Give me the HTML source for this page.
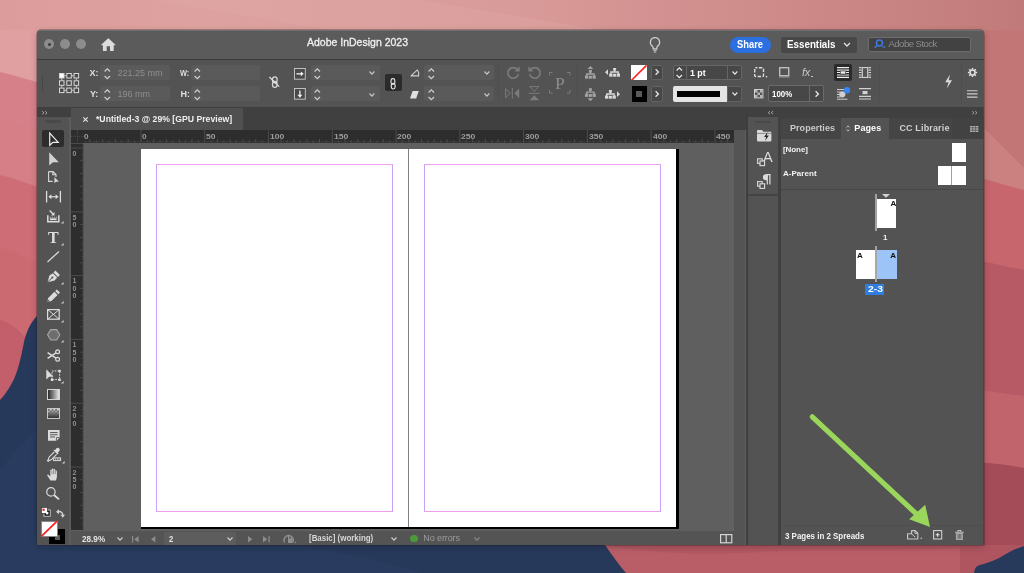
<!DOCTYPE html>
<html lang="en">
<head>
<meta charset="utf-8">
<title>Adobe InDesign 2023</title>
<style>
*{box-sizing:border-box;margin:0;padding:0}
html,body{width:1024px;height:573px;overflow:hidden;background:#cf8f92;font-family:"Liberation Sans",sans-serif;}
#stage{position:absolute;left:0;top:0;width:1024px;height:573px;overflow:hidden}
#ui{position:absolute;left:0;top:0;width:1024px;height:573px;will-change:transform}
.a{position:absolute}
#bg{position:absolute;left:0;top:0;width:1024px;height:573px}
#win{position:absolute;left:37px;top:30px;width:947px;height:515px;background:#535353;border-radius:4px 4px 0 0;box-shadow:0 0 0 .5px rgba(40,30,30,.55),0 2px 7px rgba(0,0,0,.22)}
.t{position:absolute;white-space:nowrap;color:#e6e6e6;font-weight:bold;font-size:10px;line-height:12px}
svg{position:absolute;overflow:visible}
</style>
</head>
<body>
<div id="stage">

<svg id="bg" viewBox="0 0 1024 573" width="1024" height="573">
<defs>
<linearGradient id="gtop" x1="0" y1="0" x2="1" y2="0"><stop offset="0" stop-color="#dd9c9c"/><stop offset=".2" stop-color="#dda2a0"/><stop offset=".5" stop-color="#d99b99"/><stop offset=".7" stop-color="#d08e8d"/><stop offset=".9" stop-color="#c68281"/><stop offset="1" stop-color="#c07a79"/></linearGradient>
</defs>
<rect width="1024" height="573" fill="url(#gtop)"/>
<path d="M150 0H420L600 30H330Z" fill="#e0a8a6" opacity=".35"/>
<rect x="0" y="30" width="60" height="543" fill="#e0a0a2"/>
<path d="M0 72C14 75 26 79 40 83V573H0Z" fill="#d68189"/>
<path d="M0 120C14 122 26 126 40 130V573H0Z" fill="#d67f86"/>
<path d="M0 175C14 178 26 183 40 188V573H0Z" fill="#ce6d75"/>
<path d="M0 248C14 252 26 258 40 264V573H0Z" fill="#cc6a72"/>
<path d="M0 320C10 322 20 330 28 342L20 400H0Z" fill="#c35f6a"/>
<path d="M560 545H1024V573H560Z" fill="#b25862"/>
<path d="M604 545C640 552 700 556 760 552C820 548 900 552 984 547V573H626C619 565 612 555 604 545Z" fill="#b95e67"/>
<path d="M37 316C30 323 26 333 24 342C21 358 18 370 14 379C9 389 4 396 0 400V573H626C619 565 612 555 605 545H37Z" fill="#27395b"/>
<path d="M0 470C12 455 24 440 37 430V545H300C340 552 380 560 420 573H0Z" fill="#2c4064" opacity=".5"/>
<rect x="960" y="30" width="64" height="543" fill="#c27675"/>
<path d="M960 104L1024 168V573H960Z" fill="#ca8180"/>
<path d="M960 172C980 177 1000 184 1024 190V573H960Z" fill="#c8666d"/>
<path d="M960 256C985 262 1005 266 1024 270V573H960Z" fill="#b85a65"/>
<path d="M960 388C985 390 1005 394 1024 396V573H960Z" fill="#c2646c"/>
<path d="M960 462C985 462 1005 464 1024 468V573H960Z" fill="#a54c59"/>
<path d="M960 545H1024V573H960Z" fill="#ae5560"/>
<path d="M974 573C975 568 976 566 980 565C990 562 996 560 1001 557C1008 553 1014 549 1024 546V573Z" fill="#283a5c"/>
</svg>

<div id="win"></div>
<div id="ui">
<div class="a" style="left:37px;top:30px;width:947px;height:29.5px;background:#5b5b5b;border-radius:4px 4px 0 0;border-bottom:1.500px solid #3a3a3a;border-top:1px solid #6b6e6e"></div>
<div class="a" style="left:44px;top:39.3px;width:10px;height:10px;background:#8c8c8c;border-radius:50%"></div>
<div class="a" style="left:60px;top:39.3px;width:10px;height:10px;background:#8c8c8c;border-radius:50%"></div>
<div class="a" style="left:76.3px;top:39.3px;width:10px;height:10px;background:#8c8c8c;border-radius:50%"></div>
<div class="a" style="left:47.5px;top:42.8px;width:3px;height:3px;background:#3c3c3c;border-radius:50%"></div>
<svg style="left:100.5px;top:37.8px;" width="14.6" height="13" viewBox="0 0 14.6 13"><path d="M7.300 .2Q7.300 0 7.700 .4L14.400 6.800Q14.700 7.200 14.200 7.200H12.700V12.400Q12.700 12.900 12.200 12.900H9V8.300H5.700V12.900H2.400Q1.900 12.900 1.900 12.400V7.200H.4Q-.1 7.200 .2 6.800L6.900 .4Q7.300 0 7.300 .2Z" fill="#dcdcdc"/></svg>
<div class="t" style="left:306.5px;top:36px;font-size:11px;line-height:13px;color:#f0f0f0;font-weight:normal;transform:scaleX(0.9545);transform-origin:0 0;-webkit-text-stroke:.3px #f0f0f0;">Adobe InDesign 2023</div>
<svg style="left:649px;top:37px;" width="12" height="16" viewBox="0 0 12 16"><path d="M6 .7a4.600 4.600 0 0 0-2.600 8.400c.5.5.8 1.100.8 1.900v.8h3.600v-.8c0-.8.300-1.400.8-1.900A4.600 4.600 0 0 0 6 .7Z" fill="none" stroke="#cfcfcf" stroke-width="1.300"/><path d="M4.300 13.300h3.400M4.800 15h2.400" stroke="#cfcfcf" stroke-width="1.100" fill="none"/></svg>
<div class="a" style="left:729.5px;top:36.5px;width:41px;height:16px;background:#2c6fe0;border-radius:8px"></div>
<div class="t" style="left:736.5px;top:38.3px;font-size:10.5px;line-height:12.5px;color:#fff;transform:scaleX(0.8907);transform-origin:0 0;">Share</div>
<div class="a" style="left:780.5px;top:36.5px;width:76px;height:16px;background:#484848;border-radius:2px"></div>
<div class="t" style="left:786.5px;top:38px;font-size:10.5px;line-height:12.5px;color:#fff;transform:scaleX(0.9331);transform-origin:0 0;">Essentials</div>
<svg style="left:843px;top:42px;" width="8" height="5" viewBox="0 0 8 5"><path d="M1 1l3 3 3-3" fill="none" stroke="#e0e0e0" stroke-width="1.300"/></svg>
<div class="a" style="left:868px;top:36.5px;width:103px;height:15px;background:#424242;border-radius:2px;border:1px solid #6c6c6c"></div>
<svg style="left:874px;top:39px;" width="12" height="10" viewBox="0 0 12 10"><circle cx="5.500" cy="4" r="3" fill="none" stroke="#3d7be0" stroke-width="1.400"/><path d="M3.300 6.200L.8 8.800" stroke="#3d7be0" stroke-width="1.500"/><path d="M8.500 8h3" stroke="#3d7be0" stroke-width="1.200"/></svg>
<div class="t" style="left:888.5px;top:38px;font-size:9.5px;line-height:11.5px;color:#8d8d8d;font-weight:normal;letter-spacing:-0.5px;">Adobe Stock</div>
<div class="a" style="left:42px;top:75.5px;width:1px;height:15.5px;background:#464646;"></div>
<svg style="left:59.1px;top:72.8px;" width="20.1" height="20.1" viewBox="0 0 20.1 20.1"><path d="M5.500 2.750H7.300M12.800 2.750H14.600M5.500 17.350H7.300M12.800 17.350H14.600M2.750 5.500V7.300M2.750 12.800V14.600M17.350 5.500V7.300M17.350 12.800V14.600" stroke="#d0d0d0" stroke-width="1" fill="none"/><rect x="0.5" y="0.5" width="4.500" height="4.500" fill="#fff" stroke="#d8d8d8" stroke-width="1"/><rect x="7.8" y="0.5" width="4.500" height="4.500" fill="#494949" stroke="#d8d8d8" stroke-width="1"/><rect x="15.1" y="0.5" width="4.500" height="4.500" fill="#494949" stroke="#d8d8d8" stroke-width="1"/><rect x="0.5" y="7.8" width="4.500" height="4.500" fill="#494949" stroke="#d8d8d8" stroke-width="1"/><rect x="7.8" y="7.8" width="4.500" height="4.500" fill="#494949" stroke="#d8d8d8" stroke-width="1"/><rect x="15.1" y="7.8" width="4.500" height="4.500" fill="#494949" stroke="#d8d8d8" stroke-width="1"/><rect x="0.5" y="15.1" width="4.500" height="4.500" fill="#494949" stroke="#d8d8d8" stroke-width="1"/><rect x="7.8" y="15.1" width="4.500" height="4.500" fill="#494949" stroke="#d8d8d8" stroke-width="1"/><rect x="15.1" y="15.1" width="4.500" height="4.500" fill="#494949" stroke="#d8d8d8" stroke-width="1"/></svg>
<div class="t" style="left:89.5px;top:67.5px;font-size:9px;line-height:11px;color:#dedede;">X:</div>
<div class="t" style="left:90px;top:88.5px;font-size:9px;line-height:11px;color:#dedede;">Y:</div>
<div class="a" style="left:100px;top:64.5px;width:69.5px;height:15.8px;background:#5a5a5a;border-radius:2px"></div>
<div class="a" style="left:100px;top:85.7px;width:69.5px;height:15.8px;background:#5a5a5a;border-radius:2px"></div>
<svg style="left:103.5px;top:64.5px;" width="7" height="16" viewBox="0 0 7 16"><path d="M.6 6.500L3.300 3.900L6 6.500M.6 11L3.300 13.600L6 11" fill="none" stroke="#cecece" stroke-width="1.250"/></svg>
<svg style="left:103.5px;top:85.7px;" width="7" height="16" viewBox="0 0 7 16"><path d="M.6 6.500L3.300 3.900L6 6.500M.6 11L3.300 13.600L6 11" fill="none" stroke="#cecece" stroke-width="1.250"/></svg>
<div class="t" style="left:117.5px;top:68.1px;font-size:9px;line-height:11px;color:#8e8e8e;font-weight:normal;">221.25 mm</div>
<div class="t" style="left:117.5px;top:89.2px;font-size:9px;line-height:11px;color:#8e8e8e;font-weight:normal;">196 mm</div>
<div class="t" style="left:179.8px;top:67.5px;font-size:9px;line-height:11px;color:#dedede;transform:scaleX(0.8201);transform-origin:0 0;">W:</div>
<div class="t" style="left:180.5px;top:88.5px;font-size:9px;line-height:11px;color:#dedede;">H:</div>
<div class="a" style="left:190.5px;top:64.5px;width:69.2px;height:15.8px;background:#5a5a5a;border-radius:2px"></div>
<div class="a" style="left:190.5px;top:85.7px;width:69.2px;height:15.8px;background:#5a5a5a;border-radius:2px"></div>
<svg style="left:193.5px;top:64.5px;" width="7" height="16" viewBox="0 0 7 16"><path d="M.6 6.500L3.300 3.900L6 6.500M.6 11L3.300 13.600L6 11" fill="none" stroke="#cecece" stroke-width="1.250"/></svg>
<svg style="left:193.5px;top:85.7px;" width="7" height="16" viewBox="0 0 7 16"><path d="M.6 6.500L3.300 3.900L6 6.500M.6 11L3.300 13.600L6 11" fill="none" stroke="#cecece" stroke-width="1.250"/></svg>
<svg style="left:269px;top:76px;" width="11" height="12.4" viewBox="0 0 11 12.4"><g fill="none" stroke="#d6d6d6" stroke-width="1.250"><rect x="3.500" y=".9" width="4.600" height="6" rx="2.300"/><rect x="3.500" y="5.400" width="4.600" height="6" rx="2.300"/><path d="M.4 1L10.200 10.600" stroke="#e0e0e0" stroke-width="1.150"/></g></svg>
<svg style="left:294.3px;top:67.5px;" width="11.8" height="11.7" viewBox="0 0 11.8 11.7"><rect x=".5" y=".5" width="10.800" height="10.700" fill="#4a4a4a" stroke="#c6c6c6" stroke-width=".95"/><path d="M2.400 5.850H7.500" stroke="#f4f4f4" stroke-width="1.300"/><path d="M6.800 3.400L9.700 5.850L6.800 8.300Z" fill="#f4f4f4"/></svg>
<svg style="left:294.3px;top:88.2px;" width="11.8" height="11.7" viewBox="0 0 11.8 11.7"><rect x=".5" y=".5" width="10.800" height="10.700" fill="#4a4a4a" stroke="#c6c6c6" stroke-width=".95"/><path d="M5.900 2.400V7.500" stroke="#f4f4f4" stroke-width="1.300"/><path d="M3.450 6.800L5.900 9.700L8.350 6.800Z" fill="#f4f4f4"/></svg>
<div class="a" style="left:310.5px;top:64.5px;width:69.2px;height:15.8px;background:#5a5a5a;border-radius:2px"></div>
<div class="a" style="left:310.5px;top:85.7px;width:69.2px;height:15.8px;background:#5a5a5a;border-radius:2px"></div>
<svg style="left:313.5px;top:64.5px;" width="7" height="16" viewBox="0 0 7 16"><path d="M.6 6.500L3.300 3.900L6 6.500M.6 11L3.300 13.600L6 11" fill="none" stroke="#cecece" stroke-width="1.250"/></svg>
<svg style="left:313.5px;top:85.7px;" width="7" height="16" viewBox="0 0 7 16"><path d="M.6 6.500L3.300 3.900L6 6.500M.6 11L3.300 13.600L6 11" fill="none" stroke="#cecece" stroke-width="1.250"/></svg>
<svg style="left:369.3px;top:71.3px;" width="5.8" height="4" viewBox="0 0 5.8 4"><path d="M.5 .5L2.9 3.200L5.3 .5" fill="none" stroke="#c8c8c8" stroke-width="1.150"/></svg>
<svg style="left:369.3px;top:92.5px;" width="5.8" height="4" viewBox="0 0 5.8 4"><path d="M.5 .5L2.9 3.200L5.3 .5" fill="none" stroke="#c8c8c8" stroke-width="1.150"/></svg>
<div class="a" style="left:384.8px;top:74px;width:17.2px;height:17.4px;background:#2b2b2b;border-radius:2px"></div>
<svg style="left:390.3px;top:77.6px;" width="6" height="11.6" viewBox="0 0 6 11.6"><g fill="none" stroke="#e8e8e8" stroke-width="1.100"><rect x="1" y=".6" width="3.800" height="5.800" rx="1.900"/><rect x="1.300" y="5.200" width="3.800" height="5.800" rx="1.900"/></g></svg>
<svg style="left:410px;top:68.5px;" width="10" height="8" viewBox="0 0 10 8"><path d="M7.400 .8L1 6.900H9.200M7.400 .8A7 7 0 0 1 8.400 6.900" fill="none" stroke="#d0d0d0" stroke-width="1.100" stroke-linejoin="round"/></svg>
<svg style="left:410.2px;top:90.5px;" width="8.8" height="7.4" viewBox="0 0 8.8 7.4"><path d="M2.600 0H8.800L6.200 7.500H0Z" fill="#e0e0e0"/></svg>
<div class="a" style="left:424px;top:64.5px;width:69.8px;height:15.8px;background:#5a5a5a;border-radius:2px"></div>
<div class="a" style="left:424px;top:85.7px;width:69.8px;height:15.8px;background:#5a5a5a;border-radius:2px"></div>
<svg style="left:427.5px;top:64.5px;" width="7" height="16" viewBox="0 0 7 16"><path d="M.6 6.500L3.300 3.900L6 6.500M.6 11L3.300 13.600L6 11" fill="none" stroke="#cecece" stroke-width="1.250"/></svg>
<svg style="left:427.5px;top:85.7px;" width="7" height="16" viewBox="0 0 7 16"><path d="M.6 6.500L3.300 3.900L6 6.500M.6 11L3.300 13.600L6 11" fill="none" stroke="#cecece" stroke-width="1.250"/></svg>
<svg style="left:483.5px;top:71.3px;" width="5.8" height="4" viewBox="0 0 5.8 4"><path d="M.5 .5L2.9 3.200L5.3 .5" fill="none" stroke="#c8c8c8" stroke-width="1.150"/></svg>
<svg style="left:483.5px;top:92.5px;" width="5.8" height="4" viewBox="0 0 5.8 4"><path d="M.5 .5L2.9 3.200L5.3 .5" fill="none" stroke="#c8c8c8" stroke-width="1.150"/></svg>
<div class="a" style="left:498px;top:64px;width:1px;height:38px;background:#4f4f4f;"></div>
<svg style="left:505.5px;top:66px;" width="14" height="13" viewBox="0 0 14 13"><path d="M11.300 3.600A5.300 5.300 0 1 0 12.300 8.300" fill="none" stroke="#7b7b7b" stroke-width="1.700"/><path d="M13.700 .2V5.400H8.500Z" fill="#7b7b7b"/></svg>
<svg style="left:527.5px;top:66px;" width="14" height="13" viewBox="0 0 14 13"><path d="M2.700 3.600A5.300 5.300 0 1 1 1.700 8.300" fill="none" stroke="#7b7b7b" stroke-width="1.700"/><path d="M.3 .2V5.400H5.500Z" fill="#7b7b7b"/></svg>
<svg style="left:504.8px;top:88.3px;" width="14.6" height="10.6" viewBox="0 0 14.6 10.6"><path d="M.6 .8V9.800L5.300 5.300Z" fill="none" stroke="#7b7b7b" stroke-width="1"/><path d="M7.300 0V10.600" stroke="#7b7b7b" stroke-width="1"/><path d="M14.200 .4V10.200L9.300 5.300Z" fill="#7b7b7b"/></svg>
<svg style="left:529px;top:86.3px;" width="10.6" height="14.6" viewBox="0 0 10.6 14.6"><path d="M.8 .6H9.800L5.300 5.300Z" fill="none" stroke="#7b7b7b" stroke-width="1"/><path d="M0 7.300H10.600" stroke="#7b7b7b" stroke-width="1"/><path d="M.4 14.200H10.200L5.300 9.300Z" fill="#7b7b7b"/></svg>
<svg style="left:549px;top:72px;" width="21.5" height="21.5" viewBox="0 0 21.5 21.5"><path d="M.5 3.500V.5H3.500M18 .5H21V3.500M21 18V21H18M3.500 21H.5V18" fill="none" stroke="#7d7d7d" stroke-width="1"/><text x="10.900" y="16.900" text-anchor="middle" font-family="Liberation Serif,serif" font-size="17.500" fill="#8c8c8c">P</text></svg>
<div class="a" style="left:576.5px;top:64px;width:1px;height:38px;background:#4e4e4e;"></div>
<svg style="left:584.6px;top:66px;" width="11" height="13.2" viewBox="0 0 11 13.2"><path d="M5.400 0L8.300 3H2.500Z" fill="#a2a2a2"/><path d="M5.400 4.500V8M1.700 11.500V8H9.100V11.500" fill="none" stroke="#a2a2a2" stroke-width="1.300"/><rect x="3.900" y="4" width="3" height="2.600" fill="#a2a2a2"/><rect x="0" y="9.500" width="3.300" height="3.200" fill="#a2a2a2"/><rect x="7.500" y="9.500" width="3.300" height="3.200" fill="#a2a2a2"/><rect x="3.900" y="9.800" width="3" height="2.900" fill="#a2a2a2"/></svg>
<svg style="left:584.6px;top:87.7px;" width="11" height="13.2" viewBox="0 0 11 13.2"><g transform="translate(0,-3.800)"><path d="M5.400 4.500V8M1.700 11.500V8H9.100V11.500" fill="none" stroke="#a2a2a2" stroke-width="1.300"/><rect x="3.900" y="4" width="3" height="2.600" fill="#a2a2a2"/><rect x="0" y="9.500" width="3.300" height="3.200" fill="#a2a2a2"/><rect x="7.500" y="9.500" width="3.300" height="3.200" fill="#a2a2a2"/><rect x="3.900" y="9.800" width="3" height="2.900" fill="#a2a2a2"/></g><path d="M2.500 10.200H8.300L5.400 13.200Z" fill="#a2a2a2"/></svg>
<svg style="left:605px;top:64.2px;" width="15" height="13" viewBox="0 0 15 13"><path d="M0 8.200L3 5.300V11.100Z" fill="#d8d8d8"/><g transform="translate(4.200,0)"><path d="M5.400 4.500V8M1.700 11.500V8H9.100V11.500" fill="none" stroke="#d8d8d8" stroke-width="1.300"/><rect x="3.900" y="4" width="3" height="2.600" fill="#d8d8d8"/><rect x="0" y="9.500" width="3.300" height="3.200" fill="#d8d8d8"/><rect x="7.500" y="9.500" width="3.300" height="3.200" fill="#d8d8d8"/><rect x="3.900" y="9.800" width="3" height="2.900" fill="#d8d8d8"/></g></svg>
<svg style="left:605px;top:86px;" width="15" height="13" viewBox="0 0 15 13"><g transform="translate(0,0)"><path d="M5.400 4.500V8M1.700 11.500V8H9.100V11.500" fill="none" stroke="#d8d8d8" stroke-width="1.300"/><rect x="3.900" y="4" width="3" height="2.600" fill="#d8d8d8"/><rect x="0" y="9.500" width="3.300" height="3.200" fill="#d8d8d8"/><rect x="7.500" y="9.500" width="3.300" height="3.200" fill="#d8d8d8"/><rect x="3.900" y="9.800" width="3" height="2.900" fill="#d8d8d8"/></g><path d="M15 8.200L12 5.300V11.100Z" fill="#d8d8d8"/></svg>
<div class="a" style="left:631.4px;top:64.7px;width:15.8px;height:15.8px;background:#fff;"></div>
<svg style="left:631.4px;top:64.7px;overflow:hidden;" width="15.8" height="15.8" viewBox="0 0 15.8 15.8"><path d="M.3 15.500L15.500 .3" stroke="#ff1d1d" stroke-width="1.600"/></svg>
<div class="a" style="left:631.5px;top:86px;width:15.6px;height:15.7px;background:#000;"></div>
<div class="a" style="left:636.1px;top:90.7px;width:6.2px;height:6.3px;background:#5a5a5a;"></div>
<div class="a" style="left:650.8px;top:64.5px;width:12.7px;height:15.7px;background:#474747;border:1px solid #626262;border-radius:2px"></div>
<svg style="left:655px;top:69.4px;" width="4" height="6" viewBox="0 0 4 6"><path d="M.6 .3L3.400 3L.6 5.700" fill="none" stroke="#e8e8e8" stroke-width="1.300"/></svg>
<div class="a" style="left:650.8px;top:86px;width:12.7px;height:15.7px;background:#474747;border:1px solid #626262;border-radius:2px"></div>
<svg style="left:655px;top:90.9px;" width="4" height="6" viewBox="0 0 4 6"><path d="M.6 .3L3.400 3L.6 5.700" fill="none" stroke="#e8e8e8" stroke-width="1.300"/></svg>
<div class="a" style="left:672.7px;top:64.5px;width:69.5px;height:15.8px;background:#474747;border:1px solid #666;border-radius:2px"></div>
<div class="a" style="left:686px;top:65px;width:1px;height:14.8px;background:#666;"></div>
<div class="a" style="left:727px;top:65px;width:1px;height:14.8px;background:#666;"></div>
<svg style="left:676.3px;top:64.3px;" width="7" height="16" viewBox="0 0 7 16"><path d="M.6 6.500L3.300 3.900L6 6.500M.6 11L3.300 13.600L6 11" fill="none" stroke="#ececec" stroke-width="1.250"/></svg>
<div class="t" style="left:689.8px;top:67.3px;font-size:9.5px;line-height:11.5px;color:#fff;transform:scaleX(0.9284);transform-origin:0 0;">1 pt</div>
<svg style="left:731.5px;top:71.3px;" width="5.8" height="4" viewBox="0 0 5.8 4"><path d="M.5 .5L2.9 3.200L5.3 .5" fill="none" stroke="#e6e6e6" stroke-width="1.150"/></svg>
<div class="a" style="left:673px;top:86px;width:54.4px;height:15.5px;background:#e4e4e4;border-radius:2px 0 0 2px"></div>
<div class="a" style="left:676.5px;top:91px;width:43.5px;height:5.7px;background:#000;"></div>
<div class="a" style="left:727.4px;top:86px;width:14.8px;height:15.5px;background:#474747;border:1px solid #626262;border-radius:0 2px 2px 0"></div>
<svg style="left:731.5px;top:92.3px;" width="5.8" height="4" viewBox="0 0 5.8 4"><path d="M.5 .5L2.9 3.200L5.3 .5" fill="none" stroke="#e6e6e6" stroke-width="1.150"/></svg>
<svg style="left:753.8px;top:66.8px;" width="13.5" height="10.6" viewBox="0 0 13.5 10.6"><rect x=".7" y=".7" width="8.800" height="8.800" rx="1" fill="none" stroke="#dcdcdc" stroke-width="1.400" stroke-dasharray="3.400 1.500" stroke-dashoffset="1.700"/><rect x="11.800" y="9" width="1.400" height="1.400" fill="#dcdcdc"/></svg>
<svg style="left:778.8px;top:67.4px;" width="10.4" height="10.4" viewBox="0 0 10.4 10.4"><rect x=".7" y=".7" width="9" height="8" fill="none" stroke="#bdbdbd" stroke-width="1.400"/><path d="M0 9.900H10.400" stroke="#8f8f8f" stroke-width="1.400"/></svg>
<div class="t" style="left:802px;top:65.8px;font-size:11px;line-height:13px;color:#c6c6c6;font-weight:normal;font-style:italic;letter-spacing:-.3px">fx</div>
<div class="a" style="left:811.3px;top:76px;width:1.3px;height:1.3px;background:#c6c6c6;"></div>
<div class="a" style="left:834.2px;top:63.8px;width:17.5px;height:17.1px;background:#2a2a2a;border-radius:2px"></div>
<svg style="left:837.3px;top:67px;" width="12" height="11" viewBox="0 0 12 11"><path d="M0 .6H12M0 3.100H12M0 5.500H12M0 8H12M0 10.400H12" stroke="#f0f0f0" stroke-width="1.200"/><rect x="3" y="3.700" width="6" height="3.700" fill="#2a2a2a"/><rect x="3.600" y="4.300" width="4.800" height="2.400" fill="#f0f0f0"/></svg>
<svg style="left:859px;top:67px;" width="12" height="11" viewBox="0 0 12 11"><path d="M0 .6H12M0 3.100H12M0 5.500H12M0 8H12M0 10.400H12" stroke="#d2d2d2" stroke-width="1.100"/><rect x="2.600" y="0" width="6.800" height="11" fill="#535353"/><rect x="3.300" y=".6" width="5.400" height="9.800" fill="none" stroke="#d2d2d2" stroke-width="1.100"/></svg>
<svg style="left:753.5px;top:89.4px;" width="9.4" height="9.4" viewBox="0 0 9.4 9.4"><rect x=".5" y=".5" width="8.400" height="8.400" fill="none" stroke="#d0d0d0"/><path d="M1 1h2.500v2.500H1zM6 1h2.500v2.500H6zM3.500 3.500H6V6H3.500zM1 6h2.500v2.500H1zM6 6h2.500v2.500H6z" fill="#b8b8b8"/></svg>
<div class="a" style="left:768.3px;top:85.4px;width:55.7px;height:16.3px;background:#474747;border:1px solid #6a6a6a;border-radius:2px"></div>
<div class="a" style="left:809.2px;top:86px;width:1px;height:15px;background:#6a6a6a;"></div>
<div class="t" style="left:772px;top:87.7px;font-size:9.5px;line-height:11.5px;color:#fff;transform:scaleX(0.8306);transform-origin:0 0;">100%</div>
<svg style="left:815px;top:90.6px;" width="4" height="6" viewBox="0 0 4 6"><path d="M.6 .3L3.400 3L.6 5.700" fill="none" stroke="#e8e8e8" stroke-width="1.300"/></svg>
<svg style="left:837.3px;top:87px;" width="13.4" height="12.5" viewBox="0 0 13.4 12.5"><path d="M0 2.500H7M0 5H3.500M0 7.500H2.500M0 10H3.500M0 12.200H10.500" stroke="#cfcfcf" stroke-width="1"/><circle cx="5.300" cy="7.300" r="3.100" fill="#cfcfcf"/><circle cx="10" cy="3.200" r="3.200" fill="#3a86f0"/></svg>
<svg style="left:858.8px;top:87.8px;" width="12" height="11.6" viewBox="0 0 12 11.6"><path d="M0 .6H12M0 8.400H12M0 11H12" stroke="#d2d2d2" stroke-width="1.100"/><rect x="3.500" y="3" width="5" height="3.200" fill="#d2d2d2"/></svg>
<div class="a" style="left:879px;top:64px;width:1px;height:38px;background:#4f4f4f;"></div>
<svg style="left:944px;top:74px;" width="9" height="15" viewBox="0 0 9 15"><path d="M6 .5L1.200 8.200H4.600L2.800 14.500L8 6.200H4.700Z" fill="#dcdcdc"/></svg>
<div class="a" style="left:960.5px;top:62px;width:1px;height:42px;background:#4d4d4d;"></div>
<svg style="left:967.2px;top:67px;" width="11" height="11" viewBox="0 0 11 11"><g transform="translate(5.500,5.500) scale(.84)"><circle r="3" fill="none" stroke="#e2e2e2" stroke-width="1.900"/><g stroke="#e2e2e2" stroke-width="1.900"><path d="M0 -3.600V-5.500M0 3.600V5.500M-3.600 0H-5.500M3.600 0H5.500M2.550 2.550L3.890 3.890M-2.550 2.550L-3.890 3.890M2.550 -2.550L3.890 -3.890M-2.550 -2.550L-3.890 -3.890"/></g></g></svg>
<svg style="left:967px;top:90px;" width="10.5" height="8" viewBox="0 0 10.5 8"><path d="M0 .7H10.500M0 3.900H10.500M0 7.100H10.500" stroke="#cdcdcd" stroke-width="1.100"/></svg>
<div class="a" style="left:37px;top:107px;width:947px;height:23.4px;background:#404040;"></div>
<div class="a" style="left:70.5px;top:108px;width:172.8px;height:22.4px;background:#505050;"></div>
<svg style="left:83px;top:116.7px;" width="5" height="5" viewBox="0 0 5 5"><path d="M.3 .3L4.700 4.700M4.700 .3L.3 4.700" stroke="#e8e8e8" stroke-width="1.100"/></svg>
<div class="t" style="left:96.3px;top:113.9px;font-size:9px;line-height:11px;color:#efefef;transform:scaleX(0.9632);transform-origin:0 0;">*Untitled-3 @ 29% [GPU Preview]</div>
<div class="a" style="left:70.5px;top:130.4px;width:675px;height:414.6px;background:#5f5f5f;"></div>
<div class="a" style="left:70.5px;top:130.4px;width:663.4px;height:12.6px;background:#2d2d2d;"></div>
<div class="a" style="left:70.5px;top:144.3px;width:12.8px;height:386.1px;background:#2d2d2d;"></div>
<div class="a" style="left:70.5px;top:143px;width:12.8px;height:1.3px;background:#4a4a4a;"></div>
<div class="a" style="left:729px;top:143px;width:4.9px;height:387.6px;background:#616161;"></div>
<div class="a" style="left:733.9px;top:130.4px;width:11.6px;height:414.6px;background:#545454;"></div>
<svg style="left:70.5px;top:130.4px;" width="663.4" height="12.6" viewBox="0 0 663.4 12.6"><path d="M13 11.900H663.400" stroke="#454545" stroke-width="1.400" stroke-dasharray=".7 .58"/><path d="M18.75 12.600V9M25.13 12.600V10.4M31.51 12.600V9M37.9 12.600V10.4M44.28 12.600V9M50.66 12.600V10.4M57.04 12.600V9M63.42 12.600V10.4M69.8 12.600V0M76.18 12.600V10.4M82.56 12.600V9M88.94 12.600V10.4M95.32 12.600V9M101.71 12.600V10.4M108.09 12.600V9M114.47 12.600V10.4M120.85 12.600V9M127.23 12.600V10.4M133.61 12.600V0M139.99 12.600V10.4M146.37 12.600V9M152.75 12.600V10.4M159.13 12.600V9M165.52 12.600V10.4M171.9 12.600V9M178.28 12.600V10.4M184.66 12.600V9M191.04 12.600V10.4M197.42 12.600V0M203.8 12.600V10.4M210.18 12.600V9M216.56 12.600V10.4M222.94 12.600V9M229.33 12.600V10.4M235.71 12.600V9M242.09 12.600V10.4M248.47 12.600V9M254.85 12.600V10.4M261.23 12.600V0M267.61 12.600V10.4M273.99 12.600V9M280.37 12.600V10.4M286.75 12.600V9M293.13 12.600V10.4M299.52 12.600V9M305.9 12.600V10.4M312.28 12.600V9M318.66 12.600V10.4M325.04 12.600V0M331.42 12.600V10.4M337.8 12.600V9M344.18 12.600V10.4M350.56 12.600V9M356.94 12.600V10.4M363.33 12.600V9M369.71 12.600V10.4M376.09 12.600V9M382.47 12.600V10.4M388.85 12.600V0M395.23 12.600V10.4M401.61 12.600V9M407.99 12.600V10.4M414.37 12.600V9M420.75 12.600V10.4M427.14 12.600V9M433.52 12.600V10.4M439.9 12.600V9M446.28 12.600V10.4M452.66 12.600V0M459.04 12.600V10.4M465.42 12.600V9M471.8 12.600V10.4M478.18 12.600V9M484.56 12.600V10.4M490.95 12.600V9M497.33 12.600V10.4M503.71 12.600V9M510.09 12.600V10.4M516.47 12.600V0M522.85 12.600V10.4M529.23 12.600V9M535.61 12.600V10.4M541.99 12.600V9M548.38 12.600V10.4M554.76 12.600V9M561.14 12.600V10.4M567.52 12.600V9M573.9 12.600V10.4M580.28 12.600V0M586.66 12.600V10.4M593.04 12.600V9M599.42 12.600V10.4M605.8 12.600V9M612.18 12.600V10.4M618.57 12.600V9M624.95 12.600V10.4M631.33 12.600V9M637.71 12.600V10.4M644.09 12.600V0M650.47 12.600V10.4M656.85 12.600V9" stroke="#4c4c4c" stroke-width="1" fill="none"/></svg>
<div class="t" style="left:142.2px;top:132.1px;font-size:8px;line-height:10px;color:#9c9c9c;transform:scaleX(1.0268);transform-origin:0 0;">0</div>
<div class="t" style="left:206.01px;top:132.1px;font-size:8px;line-height:10px;color:#9c9c9c;transform:scaleX(1.0698);transform-origin:0 0;">50</div>
<div class="t" style="left:269.82px;top:132.1px;font-size:8px;line-height:10px;color:#9c9c9c;transform:scaleX(1.0778);transform-origin:0 0;">100</div>
<div class="t" style="left:333.63px;top:132.1px;font-size:8px;line-height:10px;color:#9c9c9c;transform:scaleX(1.0778);transform-origin:0 0;">150</div>
<div class="t" style="left:397.44px;top:132.1px;font-size:8px;line-height:10px;color:#9c9c9c;transform:scaleX(1.0778);transform-origin:0 0;">200</div>
<div class="t" style="left:461.25px;top:132.1px;font-size:8px;line-height:10px;color:#9c9c9c;transform:scaleX(1.0778);transform-origin:0 0;">250</div>
<div class="t" style="left:525.06px;top:132.1px;font-size:8px;line-height:10px;color:#9c9c9c;transform:scaleX(1.0778);transform-origin:0 0;">300</div>
<div class="t" style="left:588.87px;top:132.1px;font-size:8px;line-height:10px;color:#9c9c9c;transform:scaleX(1.0778);transform-origin:0 0;">350</div>
<div class="t" style="left:652.68px;top:132.1px;font-size:8px;line-height:10px;color:#9c9c9c;transform:scaleX(1.0778);transform-origin:0 0;">400</div>
<div class="t" style="left:716.49px;top:132.1px;font-size:8px;line-height:10px;color:#9c9c9c;transform:scaleX(1.0778);transform-origin:0 0;">450</div>
<div class="t" style="left:84.1px;top:132.1px;font-size:8px;line-height:10px;color:#9c9c9c;transform:scaleX(1.0268);transform-origin:0 0;">0</div>
<svg style="left:70.5px;top:144.3px;" width="12.8" height="386" viewBox="0 0 12.8 386"><path d="M12.100 0V386" stroke="#454545" stroke-width="1.400" stroke-dasharray=".7 .58"/><path d="M12.800 4H0M12.800 10.38H10.6M12.800 16.76H9.2M12.800 23.14H10.6M12.800 29.52H9.2M12.800 35.91H10.6M12.800 42.29H9.2M12.800 48.67H10.6M12.800 55.05H9.2M12.800 61.43H10.6M12.800 67.81H0M12.800 74.19H10.6M12.800 80.57H9.2M12.800 86.95H10.6M12.800 93.33H9.2M12.800 99.72H10.6M12.800 106.1H9.2M12.800 112.48H10.6M12.800 118.86H9.2M12.800 125.24H10.6M12.800 131.62H0M12.800 138H10.6M12.800 144.38H9.2M12.800 150.76H10.6M12.800 157.14H9.2M12.800 163.53H10.6M12.800 169.91H9.2M12.800 176.29H10.6M12.800 182.67H9.2M12.800 189.05H10.6M12.800 195.43H0M12.800 201.81H10.6M12.800 208.19H9.2M12.800 214.57H10.6M12.800 220.95H9.2M12.800 227.33H10.6M12.800 233.72H9.2M12.800 240.1H10.6M12.800 246.48H9.2M12.800 252.86H10.6M12.800 259.24H0M12.800 265.62H10.6M12.800 272H9.2M12.800 278.38H10.6M12.800 284.76H9.2M12.800 291.14H10.6M12.800 297.53H9.2M12.800 303.91H10.6M12.800 310.29H9.2M12.800 316.67H10.6M12.800 323.05H0M12.800 329.43H10.6M12.800 335.81H9.2M12.800 342.19H10.6M12.800 348.57H9.2M12.800 354.95H10.6M12.800 361.34H9.2M12.800 367.72H10.6M12.800 374.1H9.2M12.800 380.48H10.6" stroke="#4c4c4c" stroke-width="1" fill="none"/></svg>
<div class="t" style="left:71.400px;top:149.8px;width:7px;text-align:center;font-size:8px;line-height:7.300px;font-weight:bold;color:#929292;transform:scaleX(.88);white-space:normal;word-break:break-all">0</div>
<div class="t" style="left:71.400px;top:213.61px;width:7px;text-align:center;font-size:8px;line-height:7.300px;font-weight:bold;color:#929292;transform:scaleX(.88);white-space:normal;word-break:break-all">5<br>0</div>
<div class="t" style="left:71.400px;top:277.42px;width:7px;text-align:center;font-size:8px;line-height:7.300px;font-weight:bold;color:#929292;transform:scaleX(.88);white-space:normal;word-break:break-all">1<br>0<br>0</div>
<div class="t" style="left:71.400px;top:341.23px;width:7px;text-align:center;font-size:8px;line-height:7.300px;font-weight:bold;color:#929292;transform:scaleX(.88);white-space:normal;word-break:break-all">1<br>5<br>0</div>
<div class="t" style="left:71.400px;top:405.04px;width:7px;text-align:center;font-size:8px;line-height:7.300px;font-weight:bold;color:#929292;transform:scaleX(.88);white-space:normal;word-break:break-all">2<br>0<br>0</div>
<div class="t" style="left:71.400px;top:468.85px;width:7px;text-align:center;font-size:8px;line-height:7.300px;font-weight:bold;color:#929292;transform:scaleX(.88);white-space:normal;word-break:break-all">2<br>5<br>0</div>
<svg style="left:70.5px;top:130.4px;" width="12.8" height="12.6" viewBox="0 0 12.8 12.6"><path d="M0 6.300H12.800M6.400 0V12.600" stroke="#505050" stroke-width="1" stroke-dasharray="1 1"/></svg>
<div class="a" style="left:140.7px;top:148.7px;width:538.1px;height:380.8px;background:#000;"></div>
<div class="a" style="left:140.7px;top:148.7px;width:535.8px;height:378.6px;background:#fff;"></div>
<div class="a" style="left:408px;top:148.7px;width:1px;height:378.6px;background:#808080;"></div>
<div class="a" style="left:156.41px;top:164.31px;width:236.58px;height:347.48px;border:1px solid #ee9ff0;border-left-color:#c9a2f7;border-right-color:#c9a2f7"></div>
<div class="a" style="left:424.41px;top:164.31px;width:236.38px;height:347.48px;border:1px solid #ee9ff0;border-left-color:#c9a2f7;border-right-color:#c9a2f7"></div>
<div class="a" style="left:70.5px;top:530.6px;width:663.4px;height:14.4px;background:#545454;"></div>
<div class="t" style="left:82.2px;top:532.8px;font-size:9.5px;line-height:11.5px;color:#e2e2e2;transform:scaleX(0.8599);transform-origin:0 0;">28.9%</div>
<svg style="left:116.8px;top:536.8px;" width="6" height="4" viewBox="0 0 6 4"><path d="M.5 .5L3 3.200L5.5 .5" fill="none" stroke="#cfcfcf" stroke-width="1.150"/></svg>
<svg style="left:132.4px;top:535.5px;" width="6.6" height="6.6" viewBox="0 0 6.6 6.6"><path d="M.6 0V6.600" stroke="#8c8c8c" stroke-width="1.200"/><path d="M6.600 0V6.600L2.200 3.300Z" fill="#8c8c8c"/></svg>
<svg style="left:151px;top:535.5px;" width="4.4" height="6.6" viewBox="0 0 4.4 6.6"><path d="M4.400 0V6.600L0 3.300Z" fill="#8c8c8c"/></svg>
<div class="a" style="left:163.6px;top:531.5px;width:72.4px;height:13px;background:#5d5d5d;border-radius:2px"></div>
<div class="t" style="left:168.5px;top:532.8px;font-size:9.5px;line-height:11.5px;color:#e6e6e6;transform:scaleX(0.8083);transform-origin:0 0;">2</div>
<svg style="left:226.7px;top:536.8px;" width="6" height="4" viewBox="0 0 6 4"><path d="M.5 .5L3 3.200L5.5 .5" fill="none" stroke="#cfcfcf" stroke-width="1.150"/></svg>
<svg style="left:247.6px;top:535.5px;" width="4.4" height="6.6" viewBox="0 0 4.4 6.6"><path d="M0 0V6.600L4.400 3.300Z" fill="#8c8c8c"/></svg>
<svg style="left:263px;top:535.5px;" width="6.8" height="6.6" viewBox="0 0 6.8 6.6"><path d="M0 0V6.600L4.400 3.300Z" fill="#8c8c8c"/><path d="M6.100 0V6.600" stroke="#8c8c8c" stroke-width="1.200"/></svg>
<svg style="left:283px;top:533px;" width="14" height="11" viewBox="0 0 14 11"><path d="M1.500 9.500A4.700 4.700 0 1 1 9.800 9.500" fill="none" stroke="#909090" stroke-width="1.500"/><path d="M5.600 5.500V1.800" stroke="#909090" stroke-width="1.300"/><path d="M5 5.200H9.500V10H5Z" fill="#909090"/><rect x="11.800" y="8.800" width="1.300" height="1.300" fill="#909090"/></svg>
<div class="t" style="left:308.6px;top:533px;font-size:9px;line-height:11px;color:#d8d8d8;transform:scaleX(0.8796);transform-origin:0 0;">[Basic] (working)</div>
<svg style="left:391px;top:536.8px;" width="6" height="4" viewBox="0 0 6 4"><path d="M.5 .5L3 3.200L5.5 .5" fill="none" stroke="#cfcfcf" stroke-width="1.150"/></svg>
<div class="a" style="left:410.2px;top:534.6px;width:7.6px;height:7.6px;background:#4b9b3b;border-radius:50%"></div>
<div class="t" style="left:423.3px;top:533px;font-size:9px;line-height:11px;color:#9c9c9c;font-weight:normal;letter-spacing:-0.1px;">No errors</div>
<svg style="left:473.6px;top:536.8px;" width="6" height="4" viewBox="0 0 6 4"><path d="M.5 .5L3 3.200L5.5 .5" fill="none" stroke="#8a8a8a" stroke-width="1.150"/></svg>
<svg style="left:719.5px;top:534px;" width="12.4" height="9.4" viewBox="0 0 12.4 9.4"><rect x=".6" y=".6" width="11.200" height="8.200" fill="none" stroke="#d4d4d4" stroke-width="1.200"/><path d="M6.200 .6V8.800" stroke="#d4d4d4" stroke-width="1.200"/></svg>
<div class="a" style="left:745.5px;top:107px;width:2.3px;height:438px;background:#3e3e3e;"></div>
<div class="a" style="left:37px;top:107px;width:33.5px;height:438px;background:#535353;"></div>
<div class="a" style="left:37px;top:107px;width:33.5px;height:9.6px;background:#404040;"></div>
<div class="a" style="left:69.3px;top:116.6px;width:1.5px;height:428.4px;background:#5c5c5c;"></div>
<svg style="left:42px;top:110.8px;" width="5.4" height="3.6" viewBox="0 0 5.4 3.6"><path d="M.3 .2L2 1.800L.3 3.400M3.300 .2L5 1.800L3.300 3.400" fill="none" stroke="#b4b4b4" stroke-width=".9"/></svg>
<div class="a" style="left:45px;top:120.3px;width:15.6px;height:2.4px;background:#494949;border-radius:1px"></div>
<div class="a" style="left:42.2px;top:129.7px;width:21.9px;height:17.5px;background:#2d2d2d;border-radius:2px"></div>
<svg style="left:48.9px;top:131.5px;" width="10.2" height="14.5" viewBox="0 0 10.2 14.5"><path d="M.7 1V13.300L3.900 10.400H9.200Z" fill="none" stroke="#ececec" stroke-width="1.200" stroke-linejoin="miter"/></svg>
<svg style="left:48.9px;top:151.6px;" width="10.2" height="14.2" viewBox="0 0 10.2 14.2"><path d="M.2 .2V13.600L4 10.200H9.800Z" fill="#d2d2d2"/></svg>
<svg style="left:48.4px;top:170.8px;" width="11.6" height="12.4" viewBox="0 0 11.6 12.4"><path d="M.6 .6H5L8 3.600V6M.6 .6V10.400H4.600M4.800 .8V3.800H7.800" fill="none" stroke="#d8d8d8" stroke-width="1.100"/><path d="M6.400 6V12.200L8.100 10.700H10.900Z" fill="#d8d8d8"/></svg>
<svg style="left:45.7px;top:190.9px;" width="15" height="11.5" viewBox="0 0 15 11.5"><path d="M.6 0V11.500M14.400 0V11.500" stroke="#dcdcdc" stroke-width="1.300"/><path d="M4.500 5.750H10.500" stroke="#dcdcdc" stroke-width="1.200"/><path d="M2.400 5.750L5.400 3.300V8.200ZM12.600 5.750L9.600 3.300V8.200Z" fill="#dcdcdc"/></svg>
<svg style="left:47px;top:209.5px;" width="12.6" height="12.6" viewBox="0 0 12.6 12.6"><path d="M.8 5.200V11.800H11.800V5.200" fill="none" stroke="#dcdcdc" stroke-width="1.500"/><path d="M3 8.300H9.600V10.200H3Z" fill="#dcdcdc"/><path d="M3.200 7.700V6.800M5.200 7.700V6.800M7.400 7.700V6.800M9.400 7.700V6.800" stroke="#dcdcdc" stroke-width="1"/><path d="M2.600 .5L6.200 4.100" stroke="#dcdcdc" stroke-width="1.400"/><path d="M7.500 1.900V5.400H4Z" fill="#dcdcdc"/></svg>
<svg style="left:61px;top:221.4px;" width="2.6" height="2.6" viewBox="0 0 2.6 2.6"><path d="M2.600 0V2.600H0Z" fill="#d0d0d0"/></svg>
<div class="t" style="left:46.900px;top:227.700px;width:13px;text-align:center;font-family:'Liberation Serif',serif;font-weight:bold;font-size:16px;line-height:20px;color:#dedede">T</div>
<svg style="left:61px;top:243.2px;" width="2.6" height="2.6" viewBox="0 0 2.6 2.6"><path d="M2.600 0V2.600H0Z" fill="#d0d0d0"/></svg>
<svg style="left:47px;top:251px;" width="12.5" height="11.5" viewBox="0 0 12.5 11.5"><path d="M.5 11L12 .5" stroke="#dcdcdc" stroke-width="1.200"/></svg>
<svg style="left:46.5px;top:270px;" width="13.4" height="12.6" viewBox="0 0 13.4 12.6"><path d="M8.400 .5L12.900 5L11 6.900L6.500 2.400Z" fill="#dcdcdc"/><path d="M5.800 3.200L10.200 7.600L7.600 10.600L.6 12.200L2.400 5.600Z" fill="#dcdcdc"/><path d="M.9 11.900L4.800 8" stroke="#535353" stroke-width="1"/><circle cx="5.300" cy="7.500" r="1.100" fill="#535353"/></svg>
<svg style="left:61px;top:282px;" width="2.6" height="2.6" viewBox="0 0 2.6 2.6"><path d="M2.600 0V2.600H0Z" fill="#d0d0d0"/></svg>
<svg style="left:46.5px;top:289.3px;" width="13.4" height="12.6" viewBox="0 0 13.4 12.6"><path d="M9.800 .4L13 3.600L11.400 5.200L8.200 2ZM7.400 2.800L10.600 6L4.200 12.200L.4 12.600L1.200 9Z" fill="#dcdcdc"/><path d="M.6 12.400L2.600 12.100L1 10.500Z" fill="#535353"/></svg>
<svg style="left:61px;top:300.8px;" width="2.6" height="2.6" viewBox="0 0 2.6 2.6"><path d="M2.600 0V2.600H0Z" fill="#d0d0d0"/></svg>
<svg style="left:47px;top:309.4px;" width="12.8" height="10.8" viewBox="0 0 12.8 10.8"><rect x=".6" y=".6" width="11.600" height="9.600" fill="none" stroke="#dcdcdc" stroke-width="1.200"/><path d="M.6 .6L12.200 10.200M12.200 .6L.6 10.200" stroke="#dcdcdc" stroke-width="1"/></svg>
<svg style="left:61px;top:320.4px;" width="2.6" height="2.6" viewBox="0 0 2.6 2.6"><path d="M2.600 0V2.600H0Z" fill="#d0d0d0"/></svg>
<svg style="left:46.6px;top:328.6px;" width="13.4" height="11.6" viewBox="0 0 13.4 11.6"><path d="M3.700 .6H9.700L12.800 5.800L9.700 11H3.700L.6 5.800Z" fill="#6e6e6e" stroke="#a8a8a8" stroke-width="1.100"/></svg>
<svg style="left:61px;top:339.8px;" width="2.6" height="2.6" viewBox="0 0 2.6 2.6"><path d="M2.600 0V2.600H0Z" fill="#d0d0d0"/></svg>
<svg style="left:47px;top:349.2px;" width="13" height="12.8" viewBox="0 0 13 12.8"><circle cx="10.600" cy="2.800" r="1.900" fill="none" stroke="#dcdcdc" stroke-width="1.200"/><circle cx="10.600" cy="10.200" r="1.900" fill="none" stroke="#dcdcdc" stroke-width="1.200"/><path d="M9 3.800L.6 9.400M9 9.200L.6 3.600" stroke="#dcdcdc" stroke-width="1.500"/></svg>
<svg style="left:45.7px;top:369px;" width="15" height="12.4" viewBox="0 0 15 12.4"><path d="M.3 .3V10.400L3.200 7.800H7.500Z" fill="#dcdcdc"/><rect x="6" y="2" width="7.600" height="8.600" fill="none" stroke="#dcdcdc" stroke-width="1" stroke-dasharray="1.600 1.100"/><rect x="12.400" y=".8" width="2.400" height="2.400" fill="#dcdcdc"/><rect x="12.400" y="9.600" width="2.400" height="2.400" fill="#dcdcdc"/><rect x="4.800" y="9.600" width="2.400" height="2.400" fill="#dcdcdc"/></svg>
<svg style="left:61px;top:380.8px;" width="2.6" height="2.6" viewBox="0 0 2.6 2.6"><path d="M2.600 0V2.600H0Z" fill="#d0d0d0"/></svg>
<div class="a" style="left:46.600px;top:389px;width:13.100px;height:10.600px;border:1px solid #d4d4d4;background:linear-gradient(90deg,#2a2a2a,#e6e6e6)"></div>
<div class="a" style="left:46.600px;top:408.200px;width:13.100px;height:10.600px;border:1px solid #c8c8c8;background:linear-gradient(180deg,rgba(60,60,60,0),#3a3a3a 95%),repeating-conic-gradient(#d8d8d8 0 25%,#777 0 50%) 0 0/3.600px 3.600px"></div>
<svg style="left:47.5px;top:430px;" width="11.6" height="10.8" viewBox="0 0 11.6 10.8"><path d="M0 0H11.600V7.800L8.600 10.800H0Z" fill="#dcdcdc"/><path d="M2 2.600H9.600M2 4.800H9.600M2 7H7" stroke="#535353" stroke-width="1"/><path d="M8.400 10.800V7.600H11.600" fill="none" stroke="#535353" stroke-width=".9"/></svg>
<svg style="left:46.6px;top:448.3px;" width="17" height="14.2" viewBox="0 0 17 14.2"><path d="M9.200 .6a2 2 0 0 1 3.200 2.400L10.800 4.800L11.600 5.600L10.600 6.600L6.600 2.600L7.600 1.600L8.200 2.200Z" fill="#dcdcdc"/><path d="M7.200 4L2 9.200L1.400 11.400L.5 12.600L1.200 13.200L2.400 12.400L4.400 11.600L9.600 6.400" fill="none" stroke="#dcdcdc" stroke-width="1.100"/><rect x="6.600" y="9.900" width="7" height="2.700" fill="none" stroke="#dcdcdc" stroke-width="1"/><path d="M8.600 10V12.500M10.400 10V12.500M12 10V12.500" stroke="#dcdcdc" stroke-width=".6"/></svg>
<svg style="left:62px;top:461.4px;" width="2.6" height="2.6" viewBox="0 0 2.6 2.6"><path d="M2.600 0V2.600H0Z" fill="#d0d0d0"/></svg>
<svg style="left:46.6px;top:468px;" width="13" height="12.5" viewBox="0 0 13 12.5"><path d="M3.400 12.500C2.600 10.800 1.300 9.300.4 7.700C0 6.900.9 6.200 1.700 6.900L3.300 8.600V2.300C3.300 1.200 4.900 1.200 4.900 2.300V1.200C4.900 .1 6.600 .1 6.600 1.200V1.900C6.600.8 8.300.8 8.300 1.900V3.300C8.300 2.300 9.900 2.300 9.900 3.300V8.200C9.900 10 9.400 11.300 8.900 12.500Z" fill="#dcdcdc"/><path d="M4.900 2.400V6.200M6.600 1.600V6.200M8.300 2.600V6.200" stroke="#535353" stroke-width=".55"/></svg>
<svg style="left:46px;top:487.3px;" width="14" height="13" viewBox="0 0 14 13"><circle cx="4.900" cy="4.900" r="4.200" fill="none" stroke="#dcdcdc" stroke-width="1.200"/><path d="M8 8L13 12.400" stroke="#dcdcdc" stroke-width="1.900"/></svg>
<svg style="left:41.4px;top:506.6px;" width="9.4" height="9.4" viewBox="0 0 9.4 9.4"><rect x="3" y="3" width="6.200" height="6.200" fill="#111" stroke="#e8e8e8" stroke-width=".8"/><rect x=".4" y=".4" width="6" height="6" fill="#fff" stroke="#222" stroke-width=".6"/><circle cx="2.600" cy="2.800" r="1.300" fill="#e03030"/><rect x="5" y="5" width="2.400" height="2.400" fill="#fff"/></svg>
<svg style="left:55.8px;top:509px;" width="9" height="8.8" viewBox="0 0 9 8.8"><path d="M2 2.600C5 2.200 6.600 3.600 6.800 6" fill="none" stroke="#d4d4d4" stroke-width="1.400"/><path d="M0 2.700L3 .3V5.200ZM6.800 8.800L4.400 5.700H9Z" fill="#d4d4d4"/></svg>
<div class="a" style="left:49.2px;top:528.8px;width:15.4px;height:15.7px;background:#000;"></div>
<div class="a" style="left:55.4px;top:534.5px;width:4.6px;height:5.8px;background:#5a5a5a;"></div>
<div class="a" style="left:41.4px;top:521px;width:16.2px;height:15.8px;background:#fff;border:.5px solid #888"></div>
<svg style="left:41.4px;top:521px;overflow:hidden;" width="16.2" height="15.8" viewBox="0 0 16.2 15.8"><path d="M.4 15.400L15.800 .4" stroke="#ff1d1d" stroke-width="1.700"/></svg>
<div class="a" style="left:747.5px;top:107px;width:236.5px;height:10.3px;background:#404040;"></div>
<div class="a" style="left:747.8px;top:117.3px;width:30.4px;height:427.7px;background:#535353;"></div>
<div class="a" style="left:778.2px;top:117.6px;width:2.4px;height:427.4px;background:#404040;"></div>
<div class="a" style="left:780.6px;top:117.6px;width:203.4px;height:427.4px;background:#535353;"></div>
<div class="a" style="left:982.6px;top:107px;width:1.4px;height:438px;background:#464646;"></div>
<svg style="left:767.7px;top:111px;" width="5.4" height="3.4" viewBox="0 0 5.4 3.4"><path d="M2 .2L.3 1.700L2 3.200M5 .2L3.300 1.700L5 3.200" fill="none" stroke="#b4b4b4" stroke-width=".9"/></svg>
<svg style="left:972.3px;top:111px;" width="5.4" height="3.4" viewBox="0 0 5.4 3.4"><path d="M.3 .2L2 1.700L.3 3.200M3.300 .2L5 1.700L3.300 3.200" fill="none" stroke="#b4b4b4" stroke-width=".9"/></svg>
<div class="a" style="left:754.6px;top:120.7px;width:16.6px;height:2.2px;background:#494949;border-radius:1px"></div>
<svg style="left:756.9px;top:130.3px;" width="14.4" height="11.4" viewBox="0 0 14.4 11.4"><path d="M0 1.200C0 .5.400 0 1 0H5L6.400 1.800H13.400C14 1.800 14.400 2.300 14.400 2.900V10.300C14.400 10.900 14 11.400 13.400 11.400H1C.4 11.400 0 10.900 0 10.300Z" fill="#dadada"/><path d="M0 3.400H14.400" stroke="#535353" stroke-width=".6"/><path d="M10.600 1.900L7.100 6.900H9.300L7.900 10.900L11.900 5.600H9.600Z" fill="#262626"/></svg>
<svg style="left:756.9px;top:151px;" width="15.2" height="15" viewBox="0 0 15.2 15"><text x="6" y="11.300" font-family="Liberation Sans,sans-serif" font-size="14.500" fill="#dcdcdc">A</text><rect x=".6" y="7.800" width="4.600" height="4.600" fill="#535353" stroke="#dcdcdc" stroke-width="1.100"/><rect x="3" y="10" width="4.600" height="4.600" fill="#535353" stroke="#dcdcdc" stroke-width="1.100"/></svg>
<svg style="left:756.9px;top:173.8px;" width="14.6" height="14.8" viewBox="0 0 14.6 14.8"><path d="M10.300 .5V10.400M12.900 .5V10.400M13.600 .6H9.200" stroke="#dcdcdc" stroke-width="1.200" fill="none"/><path d="M10.300 .2H8.900A3 3 0 0 0 8.900 6.200H10.300Z" fill="#dcdcdc"/><rect x=".6" y="7.600" width="4.600" height="4.600" fill="#535353" stroke="#dcdcdc" stroke-width="1.100"/><rect x="3" y="9.800" width="4.600" height="4.600" fill="#535353" stroke="#dcdcdc" stroke-width="1.100"/></svg>
<div class="a" style="left:747.5px;top:194px;width:30.7px;height:2px;background:#444;"></div>
<div class="a" style="left:780.6px;top:117.6px;width:203.4px;height:21.2px;background:#454545;"></div>
<div class="a" style="left:951.7px;top:117.6px;width:32.3px;height:21.2px;background:#424242;"></div>
<div class="a" style="left:841px;top:117.6px;width:48.4px;height:21.6px;background:#535353;"></div>
<div class="t" style="left:790px;top:123.3px;font-size:9px;line-height:11px;color:#cacaca;letter-spacing:0.05px;">Properties</div>
<svg style="left:846.3px;top:125.3px;" width="4" height="7" viewBox="0 0 4 7"><path d="M.5 2.600L2 .8L3.500 2.600M.5 4.400L2 6.200L3.500 4.400" fill="none" stroke="#bdbdbd" stroke-width=".9"/></svg>
<div class="t" style="left:854.3px;top:123.3px;font-size:9px;line-height:11px;color:#fff;letter-spacing:0.1px;">Pages</div>
<div class="t" style="left:899.4px;top:123.3px;font-size:9px;line-height:11px;color:#d0d0d0;letter-spacing:0.15px;">CC Librarie</div>
<svg style="left:970.2px;top:125.6px;" width="8.4" height="6" viewBox="0 0 8.4 6"><path d="M0 .8H8.400M0 3H8.400M0 5.200H8.400" stroke="#b2b2b2" stroke-width="1.400"/><path d="M2.800 0V6M5.600 0V6" stroke="#454545" stroke-width=".6"/></svg>
<div class="t" style="left:782.9px;top:144.5px;font-size:8px;line-height:10px;color:#f2f2f2;letter-spacing:-0.05px;">[None]</div>
<div class="t" style="left:782.9px;top:168.6px;font-size:8px;line-height:10px;color:#f2f2f2;letter-spacing:0.05px;">A-Parent</div>
<div class="a" style="left:951.9px;top:142.5px;width:13.8px;height:19.2px;background:#fff;"></div>
<div class="a" style="left:937.9px;top:166px;width:27.8px;height:19px;background:#fff;"></div>
<div class="a" style="left:951.4px;top:166px;width:0.8px;height:19px;background:#a0a0a0;"></div>
<div class="a" style="left:780.6px;top:189px;width:202px;height:1px;background:#474747;"></div>
<div class="a" style="left:875.3px;top:193.8px;width:1.3px;height:37.7px;background:#a2a2a2;"></div>
<div class="a" style="left:876.6px;top:198.6px;width:19.9px;height:29.3px;background:#fff;"></div>
<svg style="left:881.9px;top:194px;" width="8" height="3.7" viewBox="0 0 8 3.7"><path d="M0 0H8L4 3.700Z" fill="#d2d2d2"/></svg>
<div class="t" style="left:890.6px;top:199.2px;font-size:8px;line-height:10px;color:#111;">A</div>
<div class="t" style="left:882.9px;top:232.9px;font-size:8px;line-height:10px;color:#f4f4f4;">1</div>
<div class="a" style="left:875.3px;top:245.7px;width:1.3px;height:36.7px;background:#a2a2a2;"></div>
<div class="a" style="left:856.3px;top:250.3px;width:19.5px;height:28.3px;background:#fff;"></div>
<div class="a" style="left:876.5px;top:250.3px;width:20px;height:28.3px;background:#9cc4f6;"></div>
<div class="a" style="left:875.4px;top:250.3px;width:1.2px;height:28.3px;background:#a8a8a8;"></div>
<div class="t" style="left:857px;top:250.8px;font-size:8px;line-height:10px;color:#111;">A</div>
<div class="t" style="left:890.2px;top:250.8px;font-size:8px;line-height:10px;color:#111;">A</div>
<div class="a" style="left:865.1px;top:283.8px;width:19.3px;height:11.2px;background:#2f7de1;"></div>
<div class="t" style="left:867.9px;top:283.9px;font-size:8.5px;line-height:10.5px;color:#fff;transform:scaleX(1.217);transform-origin:0 0;">2-3</div>
<div class="a" style="left:780.6px;top:525px;width:202px;height:1px;background:#4e4e4e;"></div>
<div class="t" style="left:785px;top:531.2px;font-size:8.5px;line-height:10.5px;color:#f2f2f2;transform:scaleX(0.9329);transform-origin:0 0;">3 Pages in 2 Spreads</div>
<svg style="left:906.8px;top:530.3px;" width="15" height="9.6" viewBox="0 0 15 9.6"><path d="M.6 9V3.800H4.600V.6H8.200L10.800 3.200V9Z" fill="none" stroke="#c8c8c8" stroke-width="1.150" stroke-linejoin="round"/><path d="M4.600 3.800L8.200 7.200M8 .8V3.400H10.600" fill="none" stroke="#c8c8c8" stroke-width="1"/><rect x="13.600" y="7.600" width="1.300" height="1.300" fill="#c8c8c8"/></svg>
<svg style="left:932.6px;top:530.3px;" width="9.6" height="9.4" viewBox="0 0 9.6 9.4"><rect x=".6" y=".6" width="8.100" height="8.400" fill="none" stroke="#d0d0d0" stroke-width="1.100"/><path d="M4.650 2.900V6.700M2.750 4.800H6.550" stroke="#e6e6e6" stroke-width="1.100"/></svg>
<svg style="left:954.8px;top:529.8px;" width="8.8" height="10" viewBox="0 0 8.8 10"><path d="M0 2.200H8.800M3 2V.5H5.800V2" fill="none" stroke="#bdbdbd" stroke-width="1.100"/><path d="M.9 2.800H7.900V10H.9Z" fill="#a8a8a8"/><path d="M3 4V8.800M4.400 4V8.800M5.800 4V8.800" stroke="#535353" stroke-width=".7"/></svg>
<svg style="left:800px;top:410px;" width="140" height="125" viewBox="0 0 140 125"><path d="M12.300 6.800L119 106.300" stroke="#9bd65c" stroke-width="5.200" stroke-linecap="round"/><path d="M130 117L109.200 109.200L125.200 94.800Z" fill="#9bd65c"/></svg>
</div>
</div>
</body>
</html>
